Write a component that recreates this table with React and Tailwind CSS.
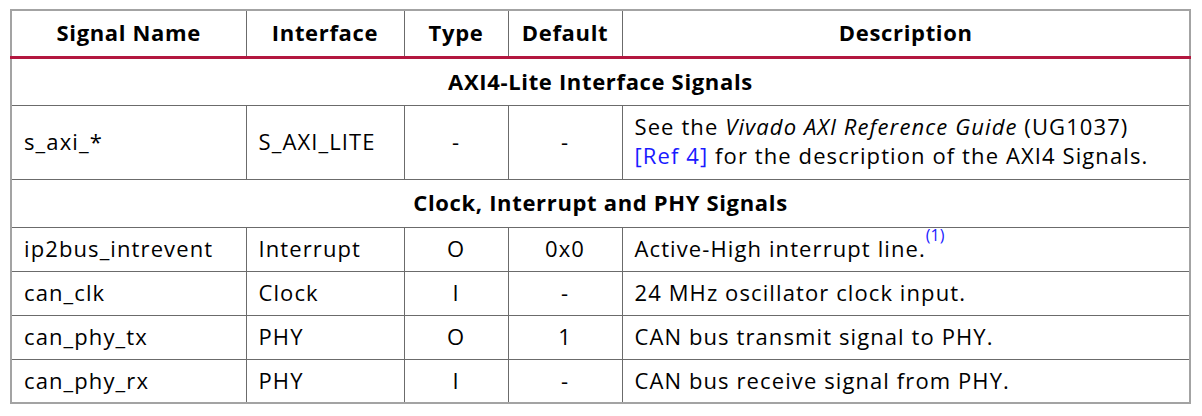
export default function App() {
    const rows = [
        { name: "ip2bus_intrevent", iface: "Interrupt", type: "O", def: "0x0", desc: "Active-High interrupt line.", note: "(1)" },
        { name: "can_clk", iface: "Clock", type: "I", def: "-", desc: "24 MHz oscillator clock input." },
        { name: "can_phy_tx", iface: "PHY", type: "O", def: "1", desc: "CAN bus transmit signal to PHY." },
        { name: "can_phy_rx", iface: "PHY", type: "I", def: "-", desc: "CAN bus receive signal from PHY." },
    ];
    const cell = "border border-[#6b6b6b] px-3 pb-[2px] align-middle whitespace-nowrap";

    return (
        <div className="bg-white w-[1202px] h-[416px] pl-[10px] pt-[9px] font-['Open_Sans','Noto_Sans',sans-serif] text-[22px] tracking-[0.05em] leading-[28px] text-black">
            <table className="table-fixed border-collapse w-[1181px] border-2 border-[#a3a3a3]">
                <colgroup>
                    <col className="w-[235px]" />
                    <col className="w-[158px]" />
                    <col className="w-[104px]" />
                    <col className="w-[114px]" />
                    <col />
                </colgroup>
                <thead>
                    <tr className="h-[47px] border-b-[3px] border-b-[#b3173f]">
                        <th className={cell + " font-bold text-center tracking-[0.03em]"}>Signal Name</th>
                        <th className={cell + " font-bold text-center tracking-[0.03em]"}>Interface</th>
                        <th className={cell + " font-bold text-center tracking-[0.03em]"}>Type</th>
                        <th className={cell + " font-bold text-center tracking-[0.03em]"}>Default</th>
                        <th className={cell + " font-bold text-center tracking-[0.03em]"}>Description</th>
                    </tr>
                </thead>
                <tbody>
                    <tr className="h-[48px]">
                        <td colSpan={5} className={cell + " font-bold text-center tracking-[0.03em]"}>AXI4-Lite Interface Signals</td>
                    </tr>
                    <tr className="h-[74px]">
                        <td className={cell}>s_axi_*</td>
                        <td className={cell}>S_AXI_LITE</td>
                        <td className={cell + " text-center"}>-</td>
                        <td className={cell + " text-center"}>-</td>
                        <td className={cell + " leading-[29px]"}>
                            See the <i>Vivado AXI Reference Guide</i> (UG1037)
                            <br />
                            <span className="text-[#1a1aff]">[Ref 4]</span> for the description of the AXI4 Signals.
                        </td>
                    </tr>
                    <tr className="h-[48px]">
                        <td colSpan={5} className={cell + " font-bold text-center tracking-[0.03em]"}>Clock, Interrupt and PHY Signals</td>
                    </tr>
                    {rows.map((r) => (
                        <tr key={r.name} className="h-[44px]">
                            <td className={cell}>{r.name}</td>
                            <td className={cell}>{r.iface}</td>
                            <td className={cell + " text-center"}>{r.type}</td>
                            <td className={cell + " text-center"}>{r.def}</td>
                            <td className={cell}>
                                {r.desc}
                                <sup className="text-[16px] tracking-normal text-[#1a1aff] align-[8px]">{r.note}</sup>
                            </td>
                        </tr>
                    ))}
                </tbody>
            </table>
        </div>
    );
}
